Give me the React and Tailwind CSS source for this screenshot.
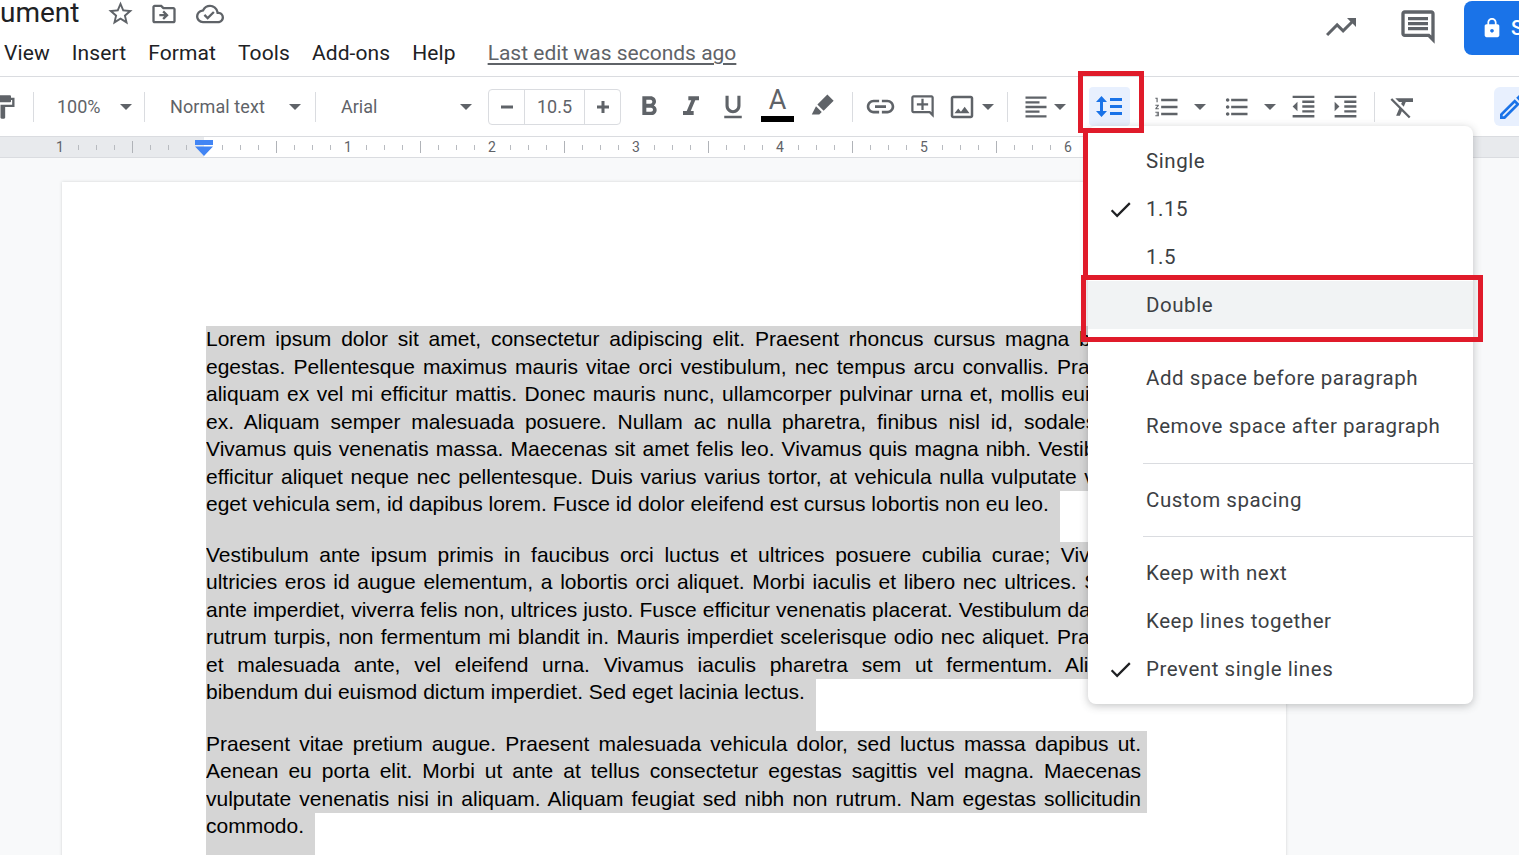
import React from 'react'
import {
  MdStarBorder,
  MdOutlineDriveFileMove,
  MdOutlineCloudDone,
  MdTrendingUp,
  MdOutlineComment,
  MdLock,
  MdFormatPaint,
  MdFormatBold,
  MdFormatItalic,
  MdFormatUnderlined,
  MdInsertLink,
  MdOutlineAddComment,
  MdOutlineImage,
  MdFormatAlignLeft,
  MdFormatListNumbered,
  MdFormatListBulleted,
  MdFormatIndentDecrease,
  MdFormatIndentIncrease,
  MdFormatClear,
  MdOutlineEdit,
  MdCheck
} from 'react-icons/md'

const paragraphs = [
  {
    lines: [
      'Lorem ipsum dolor sit amet, consectetur adipiscing elit. Praesent rhoncus cursus magna blandit',
      'egestas. Pellentesque maximus mauris vitae orci vestibulum, nec tempus arcu convallis. Praesent',
      'aliquam ex vel mi efficitur mattis. Donec mauris nunc, ullamcorper pulvinar urna et, mollis euismod',
      'ex. Aliquam semper malesuada posuere. Nullam ac nulla pharetra, finibus nisl id, sodales leo.',
      'Vivamus quis venenatis massa. Maecenas sit amet felis leo. Vivamus quis magna nibh. Vestibulum',
      'efficitur aliquet neque nec pellentesque. Duis varius varius tortor, at vehicula nulla vulputate vel ac'
    ],
    last: 'eget vehicula sem, id dapibus lorem. Fusce id dolor eleifend est cursus lobortis non eu leo.',
    lastClass: 'w-[854px] h-[50.5px]'
  },
  {
    lines: [
      'Vestibulum ante ipsum primis in faucibus orci luctus et ultrices posuere cubilia curae; Vivamus',
      'ultricies eros id augue elementum, a lobortis orci aliquet. Morbi iaculis et libero nec ultrices. Sed a',
      'ante imperdiet, viverra felis non, ultrices justo. Fusce efficitur venenatis placerat. Vestibulum dapibus',
      'rutrum turpis, non fermentum mi blandit in. Mauris imperdiet scelerisque odio nec aliquet. Praesent',
      'et malesuada ante, vel eleifend urna. Vivamus iaculis pharetra sem ut fermentum. Aliquam'
    ],
    last: 'bibendum dui euismod dictum imperdiet. Sed eget lacinia lectus.',
    lastClass: 'w-[610px] h-[51.5px]'
  },
  {
    lines: [
      'Praesent vitae pretium augue. Praesent malesuada vehicula dolor, sed luctus massa dapibus ut.',
      'Aenean eu porta elit. Morbi ut ante at tellus consectetur egestas sagittis vel magna. Maecenas',
      'vulputate venenatis nisi in aliquam. Aliquam feugiat sed nibh non rutrum. Nam egestas sollicitudin'
    ],
    last: 'commodo.',
    lastClass: 'w-[109px] h-[50px]'
  }
]

const menuItems = ['View', 'Insert', 'Format', 'Tools', 'Add-ons', 'Help']

const rulerTicks = Array.from({ length: 62 }, (_, i) => i)

function Caret({ className = '' }) {
  return (
    <svg width="12" height="6" viewBox="0 0 12 6" className={`shrink-0 ${className}`}>
      <path d="M0 0h12L6 6z" fill="#5f6368" />
    </svg>
  )
}

function Sep({ className = '' }) {
  return <div className={`w-px h-[30px] shrink-0 bg-[#dadce0] ${className}`} />
}

function Tool({ className = '', children }) {
  return (
    <div className={`h-[39px] shrink-0 flex items-center justify-center text-[#5f6368] ${className}`}>
      {children}
    </div>
  )
}

function RulerCell({ i }) {
  let inner = <div className="w-px h-[5px] bg-[#b8bbc0]" />
  if (i === 8) inner = null
  else if (i % 8 === 0) inner = <span>{i === 0 ? 1 : i / 8 - 1}</span>
  else if (i % 4 === 0) inner = <div className="w-px h-[12px] bg-[#b0b3b8]" />
  return <div className="w-[18px] shrink-0 flex items-center justify-center">{inner}</div>
}

function MenuRow({ checked, hover, children }) {
  return (
    <div className={`h-[48px] flex items-center ${hover ? 'bg-[#f1f3f4]' : ''}`}>
      <div className="w-[58px] flex justify-end shrink-0">
        {checked && <MdCheck size={27} className="text-[#202124] mr-[12px]" />}
      </div>
      <span className="tracking-[0.55px]">{children}</span>
    </div>
  )
}

function MenuDivider({ className = 'h-[25px]' }) {
  return (
    <div className={`flex items-center pl-[55px] ${className}`}>
      <div className="h-px w-full bg-[#dadce0]" />
    </div>
  )
}

export default function App() {
  return (
    <div className="relative w-[1519px] h-[855px] overflow-hidden bg-[#f8f9fa] font-['Roboto',sans-serif] text-[#3c4043]">
      {/* title + menu */}
      <header className="h-[77px] bg-white border-b border-[#dadce0] flex">
        <div className="flex-1">
          <div className="h-[28px] flex items-center text-[#5f6368]">
            <span className="text-[28px] leading-[26px] text-[#202124] -mt-[3px]">ument</span>
            <MdStarBorder size={29} className="ml-[27px] -mt-[1px]" />
            <MdOutlineDriveFileMove size={28} className="ml-[15px] -mt-[1px]" />
            <MdOutlineCloudDone size={28} className="ml-[18px] -mt-[1px]" />
          </div>
          <div className="mt-[12px] h-[28px] flex items-center gap-[22px] pl-[4px] text-[21px] tracking-[0.1px] text-[#202124]">
            {menuItems.map((item) => (
              <span key={item}>{item}</span>
            ))}
            <span className="ml-[10px] underline underline-offset-[3px] tracking-normal text-[#5f6368]">
              Last edit was seconds ago
            </span>
          </div>
        </div>
        <div className="flex items-start text-[#5f6368]">
          <MdTrendingUp size={36} className="mt-[9px]" />
          <MdOutlineComment size={40} className="mt-[7px] ml-[39px]" />
          <div className="mt-[1px] ml-[26px] w-[55px] overflow-hidden h-[54px] rounded-l-lg bg-[#1a73e8] text-white flex items-center pl-[17px] gap-[8px] text-[20px] font-medium">
            <MdLock size={22} className="shrink-0" />
            <span>S</span>
          </div>
        </div>
      </header>

      {/* toolbar */}
      <div className="h-[59px] bg-white flex items-center text-[18px] whitespace-nowrap">
        <Tool className="w-[18px] overflow-hidden justify-end">
          <MdFormatPaint size={28} className="shrink-0" />
        </Tool>
        <Sep className="ml-[15px]" />
        <span className="ml-[23px] w-[44px] shrink-0 text-[#5f6368]">100%</span>
        <Caret className="ml-[19px]" />
        <Sep className="ml-[12px]" />
        <span className="ml-[25px] w-[94px] shrink-0 tracking-[0.1px] text-[#5f6368]">Normal text</span>
        <Caret className="ml-[25px]" />
        <Sep className="ml-[14px]" />
        <span className="ml-[25px] w-[119px] shrink-0 text-[#5f6368]">Arial</span>
        <Caret />
        <div className="ml-[16px] w-[133px] h-[36px] shrink-0 flex border border-[#dadce0] rounded-[4px] text-[#5f6368]">
          <div className="w-[36px] flex items-center justify-center border-r border-[#dadce0]">
            <svg width="14" height="14" viewBox="0 0 14 14" fill="currentColor">
              <path d="M1 5.500h12v3H1z" />
            </svg>
          </div>
          <div className="flex-1 flex items-center justify-center">10.5</div>
          <div className="w-[36px] flex items-center justify-center border-l border-[#dadce0]">
            <svg width="14" height="14" viewBox="0 0 14 14" fill="currentColor">
              <path d="M1 5.500h4.500V1h3v4.500H13v3H8.500V13h-3V8.500H1z" />
            </svg>
          </div>
        </div>
        <Tool className="ml-[7px] w-[42px]">
          <MdFormatBold size={32} />
        </Tool>
        <Tool className="w-[42px]">
          <MdFormatItalic size={32} />
        </Tool>
        <Tool className="w-[42px]">
          <MdFormatUnderlined size={30} />
        </Tool>
        <div className="ml-[7px] w-[33px] shrink-0 flex flex-col items-center">
          <span className="text-[27px] leading-[27px] text-[#5f6368] -mt-[5px]">A</span>
          <div className="w-full h-[6px] bg-black mt-[2px]" />
        </div>
        <Tool className="ml-[8px] w-[42px]">
          <svg width="30" height="30" viewBox="0 0 24 24" fill="currentColor" className="-mt-[4px]">
            <path d="M15.5 3.5l5 5-8 8-5-5zM6.4 13l4.600 4.600-2 1.900H3z" />
          </svg>
        </Tool>
        <Sep className="ml-[8px]" />
        <Tool className="ml-[6px] w-[42px]">
          <MdInsertLink size={33} />
        </Tool>
        <Tool className="w-[42px]">
          <MdOutlineAddComment size={27} />
        </Tool>
        <Tool className="ml-[2px] w-[34px]">
          <MdOutlineImage size={30} />
        </Tool>
        <Caret className="ml-[3px]" />
        <Sep className="ml-[13px]" />
        <Tool className="ml-[11px] w-[34px]">
          <MdFormatAlignLeft size={28} />
        </Tool>
        <Caret className="ml-[1px]" />
        <div className="ml-[23px] w-[41px] h-[39px] shrink-0 flex items-center justify-center rounded-[4px] bg-[#e8f0fe]">
          <svg width="27" height="21" viewBox="0 0 27 21" fill="#1a73e8" className="-ml-[3px]">
            <path d="M6.5 0l5.500 6H8v9h4l-5.500 6L1 15h4V6H1z" />
            <path d="M15 2h12v3H15zM15 9h12v3H15zM15 16h12v3H15z" />
          </svg>
        </div>
        <Tool className="ml-[20px] w-[34px]">
          <MdFormatListNumbered size={28} />
        </Tool>
        <Caret className="ml-[10px]" />
        <Tool className="ml-[14px] w-[34px]">
          <MdFormatListBulleted size={28} />
        </Tool>
        <Caret className="ml-[10px]" />
        <Tool className="ml-[10px] w-[34px]">
          <MdFormatIndentDecrease size={29} />
        </Tool>
        <Tool className="ml-[8px] w-[34px]">
          <MdFormatIndentIncrease size={29} />
        </Tool>
        <Sep className="ml-[12px]" />
        <Tool className="ml-[11px] w-[34px]">
          <MdFormatClear size={30} />
        </Tool>
        <div className="ml-[74px] w-[60px] h-[39px] shrink-0 flex items-center pl-[2px] rounded-l-[6px] bg-[#e8f0fe] text-[#1a73e8]">
          <MdOutlineEdit size={32} />
        </div>
      </div>

      {/* ruler */}
      <div className="relative h-[22px] border-y border-[#dadce0] bg-[linear-gradient(to_right,#e8eaed_204px,#fff_204px,#fff_1100px,#e8eaed_1100px)] flex items-center pl-[51px] text-[14px] text-[#5f6368] overflow-hidden">
        {rulerTicks.map((i) => (
          <RulerCell key={i} i={i} />
        ))}
        <svg width="20" height="17" viewBox="0 0 20 17" className="absolute left-[194px] top-[3px]">
          <path d="M1 0h18v5H1zM1 6.5h18L10 16z" fill="#4285f4" />
        </svg>
      </div>

      {/* document */}
      <main className="h-[697px]">
        <div className="ml-[62px] mt-[24px] w-[1224px] h-[800px] bg-white shadow-[0_0_3px_rgba(60,64,67,0.2)] pt-[144px] pl-[144px] font-['Liberation_Sans',Arial,sans-serif] text-[21px] leading-[26px] text-black">
          {paragraphs.map((p) => (
            <div key={p.last}>
              {p.lines.map((line) => (
                <div
                  key={line}
                  className="w-[941px] h-[27.5px] pr-[6px] overflow-hidden bg-[#d5d5d5] text-justify [text-align-last:justify]"
                >
                  {line}
                </div>
              ))}
              <div className={`bg-[#d5d5d5] ${p.lastClass}`}>{p.last}</div>
            </div>
          ))}
        </div>
      </main>

      {/* line spacing dropdown */}
      <div className="absolute left-[1088px] top-[126px] w-[385px] py-[11px] bg-white rounded-lg shadow-[0_2px_8px_rgba(60,64,67,0.3)] text-[20.5px] text-[#3c4043]">
        <MenuRow>Single</MenuRow>
        <MenuRow checked>1.15</MenuRow>
        <MenuRow>1.5</MenuRow>
        <MenuRow hover>Double</MenuRow>
        <div className="h-[25px]" />
        <MenuRow>Add space before paragraph</MenuRow>
        <MenuRow>Remove space after paragraph</MenuRow>
        <MenuDivider className="h-[26px]" />
        <MenuRow>Custom spacing</MenuRow>
        <MenuDivider />
        <MenuRow>Keep with next</MenuRow>
        <MenuRow>Keep lines together</MenuRow>
        <MenuRow checked>Prevent single lines</MenuRow>
      </div>

      {/* red annotation boxes */}
      <div className="absolute left-[1078px] top-[71px] w-[66px] h-[62px] border-[5px] border-[#e01b2a]" />
      <div className="absolute left-[1083px] top-[133px] w-[5px] h-[145px] bg-[#e01b2a]" />
      <div className="absolute left-[1081px] top-[275px] w-[402px] h-[67px] border-[5px] border-[#e01b2a]" />
    </div>
  )
}
